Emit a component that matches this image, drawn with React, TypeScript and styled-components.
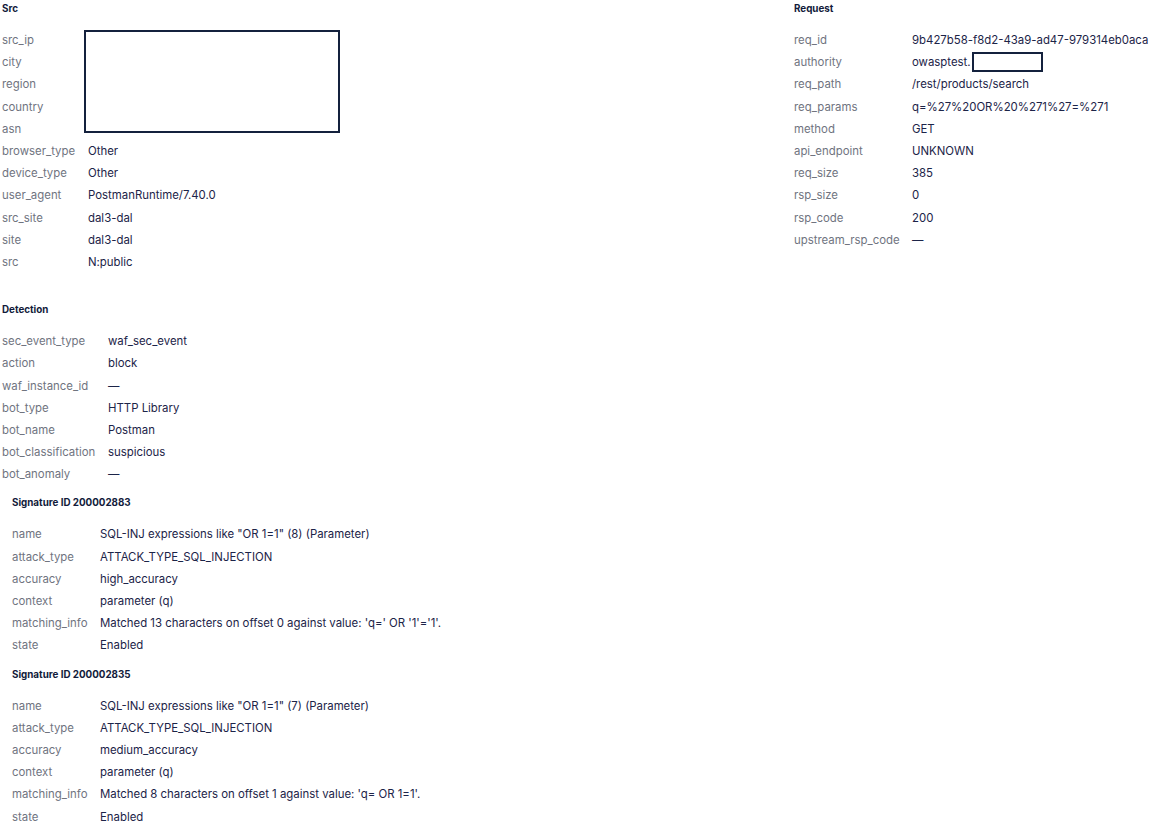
import React from "react";
import styled, { createGlobalStyle } from "styled-components";

const Global = createGlobalStyle`
  html, body { margin: 0; padding: 0; background: #ffffff; }
  body { font-family: Inter, "Noto Sans", sans-serif; -webkit-font-smoothing: antialiased; }
`;

const Page = styled.div`
  padding: 1px 0 0 2px;
  width: 1153px;
`;

const TopGrid = styled.div`
  display: grid;
  grid-template-columns: 792px 1fr;
`;

const Section = styled.section<{ $indent?: number; $top?: number }>`
  padding-left: ${(p) => p.$indent ?? 0}px;
  margin-top: ${(p) => p.$top ?? 0}px;
`;

const Heading = styled.h3`
  margin: 0 0 12px 0;
  font-size: 9.8px;
  line-height: 16px;
  font-weight: 700;
  color: #121b3b;
`;

const Rows = styled.div<{ $labelWidth: number }>`
  display: grid;
  grid-template-columns: ${(p) => p.$labelWidth}px 1fr;
  grid-auto-rows: 22.2px;
  align-items: center;
`;

const Label = styled.div`
  font-size: 11.4px;
  line-height: 16px;
  color: #70747f;
  white-space: nowrap;
`;

const Value = styled.div`
  font-size: 11.4px;
  line-height: 16px;
  color: #1c2448;
  white-space: nowrap;
  display: flex;
  align-items: center;
`;

const RedactBlock = styled.div`
  grid-column: 2;
  grid-row: 1 / span 5;
  align-self: start;
  margin: 1px 0 0 -4px;
  width: 256px;
  height: 103px;
  box-sizing: border-box;
  border: 2px solid #14213d;
`;

const RedactInline = styled.span`
  display: inline-block;
  width: 71px;
  height: 20px;
  box-sizing: border-box;
  border: 2px solid #14213d;
  margin-left: 1px;
`;

type Row = [string, React.ReactNode];

const renderRows = (rows: Row[]) =>
  rows.map(([k, v], i) => (
    <React.Fragment key={k + i}>
      <Label style={{ gridRow: i + 1, gridColumn: 1 }}>{k}</Label>
      {v !== null && <Value style={{ gridRow: i + 1, gridColumn: 2 }}>{v}</Value>}
    </React.Fragment>
  ));

const srcRows: Row[] = [
  ["src_ip", null],
  ["city", null],
  ["region", null],
  ["country", null],
  ["asn", null],
  ["browser_type", "Other"],
  ["device_type", "Other"],
  ["user_agent", "PostmanRuntime/7.40.0"],
  ["src_site", "dal3-dal"],
  ["site", "dal3-dal"],
  ["src", "N:public"],
];

const requestRows: Row[] = [
  ["req_id", "9b427b58-f8d2-43a9-ad47-979314eb0aca"],
  [
    "authority",
    <>
      owasptest.
      <RedactInline />
    </>,
  ],
  ["req_path", "/rest/products/search"],
  ["req_params", "q=%27%20OR%20%271%27=%271"],
  ["method", "GET"],
  ["api_endpoint", "UNKNOWN"],
  ["req_size", "385"],
  ["rsp_size", "0"],
  ["rsp_code", "200"],
  ["upstream_rsp_code", "—"],
];

const detectionRows: Row[] = [
  ["sec_event_type", "waf_sec_event"],
  ["action", "block"],
  ["waf_instance_id", "—"],
  ["bot_type", "HTTP Library"],
  ["bot_name", "Postman"],
  ["bot_classification", "suspicious"],
  ["bot_anomaly", "—"],
];

const signatures: { id: string; rows: Row[] }[] = [
  {
    id: "200002883",
    rows: [
      ["name", 'SQL-INJ expressions like "OR 1=1" (8) (Parameter)'],
      ["attack_type", "ATTACK_TYPE_SQL_INJECTION"],
      ["accuracy", "high_accuracy"],
      ["context", "parameter (q)"],
      ["matching_info", "Matched 13 characters on offset 0 against value: 'q=' OR '1'='1'."],
      ["state", "Enabled"],
    ],
  },
  {
    id: "200002835",
    rows: [
      ["name", 'SQL-INJ expressions like "OR 1=1" (7) (Parameter)'],
      ["attack_type", "ATTACK_TYPE_SQL_INJECTION"],
      ["accuracy", "medium_accuracy"],
      ["context", "parameter (q)"],
      ["matching_info", "Matched 8 characters on offset 1 against value: 'q= OR 1=1'."],
      ["state", "Enabled"],
    ],
  },
];

export default function App() {
  return (
    <Page>
      <Global />
      <TopGrid>
        <Section>
          <Heading>Src</Heading>
          <Rows $labelWidth={86}>
            {renderRows(srcRows)}
            <RedactBlock />
          </Rows>
        </Section>
        <Section>
          <Heading>Request</Heading>
          <Rows $labelWidth={118}>{renderRows(requestRows)}</Rows>
        </Section>
      </TopGrid>
      <Section $top={29}>
        <Heading>Detection</Heading>
        <Rows $labelWidth={106}>{renderRows(detectionRows)}</Rows>
      </Section>
      {signatures.map((s) => (
        <Section key={s.id} $indent={10} $top={10}>
          <Heading>Signature ID {s.id}</Heading>
          <Rows $labelWidth={88}>{renderRows(s.rows)}</Rows>
        </Section>
      ))}
    </Page>
  );
}
